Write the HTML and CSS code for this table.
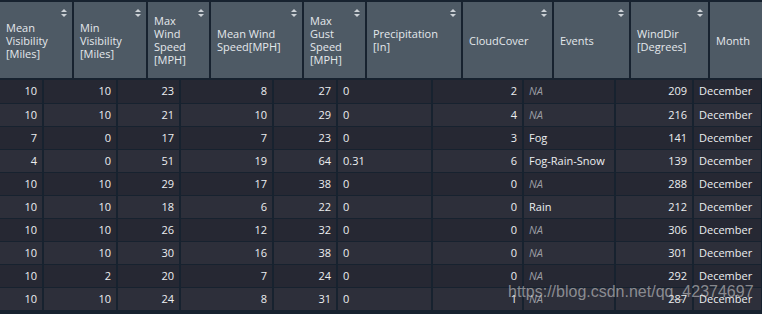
FILE: index.html
```html
<!DOCTYPE html>
<html>
<head>
<meta charset="utf-8">
<link rel="stylesheet" href="styles.css">
</head>
<body>
<div class="viewer">
  <table class="head">
    <colgroup>
      <col style="width:73px"><col style="width:74px"><col style="width:63px"><col style="width:93px"><col style="width:63px"><col style="width:96px"><col style="width:91px"><col style="width:77px"><col style="width:79px"><col style="width:60px">
    </colgroup>
    <tr>
      <th><span class="sort"></span>Mean<br>Visibility<br>[Miles]</th>
      <th><span class="sort"></span>Min<br>Visibility<br>[Miles]</th>
      <th><span class="sort"></span>Max<br>Wind<br>Speed<br>[MPH]</th>
      <th><span class="sort"></span>Mean Wind<br>Speed[MPH]</th>
      <th><span class="sort"></span>Max<br>Gust<br>Speed<br>[MPH]</th>
      <th><span class="sort"></span>Precipitation<br>[In]</th>
      <th><span class="sort"></span>CloudCover</th>
      <th><span class="sort"></span>Events</th>
      <th><span class="sort"></span>WindDir<br>[Degrees]</th>
      <th>Month</th>
    </tr>
  </table>
  <table class="body">
    <colgroup>
      <col style="width:43px"><col style="width:74px"><col style="width:63px"><col style="width:93px"><col style="width:64px"><col style="width:95px"><col style="width:91px"><col style="width:92px"><col style="width:78px"><col style="width:69px">
    </colgroup>
    <tr><td class="n">10</td><td class="n">10</td><td class="n">23</td><td class="n">8</td><td class="n">27</td><td>0</td><td class="n">2</td><td class="na">NA</td><td class="n">209</td><td>December</td></tr>
    <tr><td class="n">10</td><td class="n">10</td><td class="n">21</td><td class="n">10</td><td class="n">29</td><td>0</td><td class="n">4</td><td class="na">NA</td><td class="n">216</td><td>December</td></tr>
    <tr><td class="n">7</td><td class="n">0</td><td class="n">17</td><td class="n">7</td><td class="n">23</td><td>0</td><td class="n">3</td><td>Fog</td><td class="n">141</td><td>December</td></tr>
    <tr><td class="n">4</td><td class="n">0</td><td class="n">51</td><td class="n">19</td><td class="n">64</td><td>0.31</td><td class="n">6</td><td>Fog-Rain-Snow</td><td class="n">139</td><td>December</td></tr>
    <tr><td class="n">10</td><td class="n">10</td><td class="n">29</td><td class="n">17</td><td class="n">38</td><td>0</td><td class="n">0</td><td class="na">NA</td><td class="n">288</td><td>December</td></tr>
    <tr><td class="n">10</td><td class="n">10</td><td class="n">18</td><td class="n">6</td><td class="n">22</td><td>0</td><td class="n">0</td><td>Rain</td><td class="n">212</td><td>December</td></tr>
    <tr><td class="n">10</td><td class="n">10</td><td class="n">26</td><td class="n">12</td><td class="n">32</td><td>0</td><td class="n">0</td><td class="na">NA</td><td class="n">306</td><td>December</td></tr>
    <tr><td class="n">10</td><td class="n">10</td><td class="n">30</td><td class="n">16</td><td class="n">38</td><td>0</td><td class="n">0</td><td class="na">NA</td><td class="n">301</td><td>December</td></tr>
    <tr><td class="n">10</td><td class="n">2</td><td class="n">20</td><td class="n">7</td><td class="n">24</td><td>0</td><td class="n">0</td><td class="na">NA</td><td class="n">292</td><td>December</td></tr>
    <tr><td class="n">10</td><td class="n">10</td><td class="n">24</td><td class="n">8</td><td class="n">31</td><td>0</td><td class="n">1</td><td class="na">NA</td><td class="n">287</td><td>December</td></tr>
  </table>
  <div class="watermark">https://blog.csdn.net/qq_42374697</div>
</div>
</body>
</html>
```

FILE: styles.css
```css
html, body {
  margin: 0;
  padding: 0;
  background: #17222f;
  overflow: hidden;
}
.viewer {
  position: relative;
  width: 762px;
  height: 314px;
  overflow: hidden;
  font-family: "Open Sans", "DejaVu Sans", sans-serif;
  font-size: 11px;
  background: #17222f;
}
table {
  border-collapse: collapse;
  table-layout: fixed;
}
.head {
  width: 769px;
  margin-top: 2px;
}
.head th {
  position: relative;
  height: 76px;
  padding: 0 6px;
  box-sizing: border-box;
  background: #4e5a65;
  color: #e4e8ec;
  font-weight: normal;
  text-align: left;
  vertical-align: middle;
  line-height: 13px;
  border-right: 2px solid #17222f;
  white-space: nowrap;
  overflow: hidden;
}
.head th:last-child {
  border-right: none;
}
.sort {
  position: absolute;
  top: 7px;
  right: 8px;
  width: 0;
  height: 0;
}
.sort::before, .sort::after {
  content: "";
  position: absolute;
  left: -3px;
  border-left: 3px solid transparent;
  border-right: 3px solid transparent;
}
.sort::before {
  top: 0;
  border-bottom: 3px solid #cdd2d7;
}
.sort::after {
  top: 5px;
  border-top: 3px solid #cdd2d7;
}
.body {
  width: 762px;
  margin-top: 2px;
}
.body td {
  height: 23px;
  padding: 0 5px;
  box-sizing: border-box;
  color: #eceef0;
  border-right: 2px solid #17222f;
  border-bottom: 1px solid #17222f;
  white-space: nowrap;
  overflow: hidden;
  line-height: 22px;
}
.body tr:nth-child(odd) td {
  background: #262833;
}
.body tr:nth-child(even) td {
  background: #2d2f3a;
}
.body td.n {
  text-align: right;
}
.body td.na {
  font-style: italic;
  color: #9b9ea4;
}
.watermark {
  position: absolute;
  left: 508px;
  top: 283px;
  font-family: "Liberation Sans", Arial, sans-serif;
  font-size: 16px;
  color: rgba(220, 220, 220, 0.55);
  white-space: nowrap;
  pointer-events: none;
}
```
